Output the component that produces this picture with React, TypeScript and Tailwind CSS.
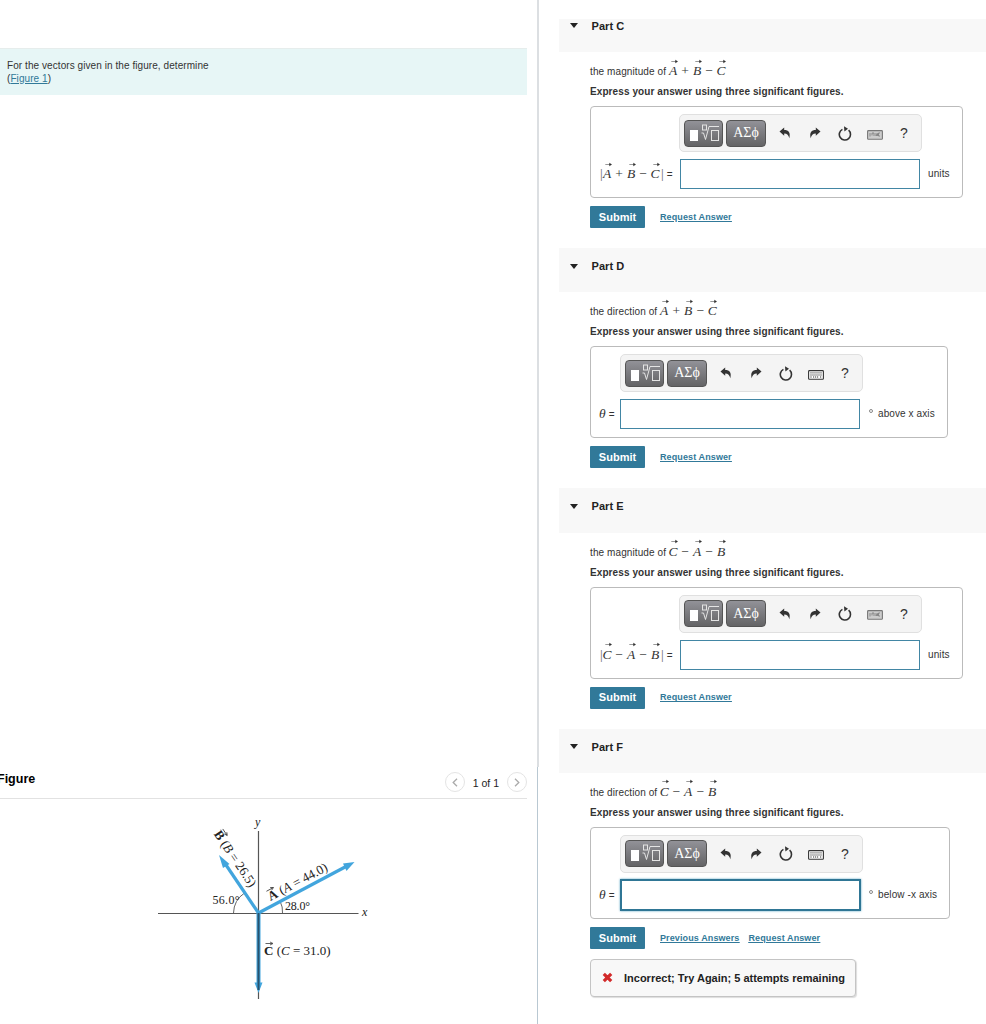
import type { ReactNode } from "react";

type PartProps = {
  title: string;
  kind: "magnitude" | "direction";
  formula: ReactNode;
  suffix: string;
  focused?: boolean;
  blurKeys?: boolean;
  children?: ReactNode;
};

const Vec = ({ children }: { children: string }) => (
  <span className="relative inline-block w-[10px] text-center">
    <i>{children}</i>
    <svg className="absolute -top-[1.5px] left-[3px]" width="7" height="5" viewBox="0 0 7 5">
      <path d="M0.3 2.5H5.5M4.5 1.2L6.6 2.5L4.5 3.8Z" stroke="#333" strokeWidth="0.5" fill="#333" />
    </svg>
  </span>
);

const Op = ({ children }: { children: string }) => (
  <span className="inline-block w-[14px] text-center">{children}</span>
);

const Sum = () => (
  <>
    <Vec>A</Vec>
    <Op>+</Op>
    <Vec>B</Vec>
    <Op>−</Op>
    <Vec>C</Vec>
  </>
);

const Difference = () => (
  <>
    <Vec>C</Vec>
    <Op>−</Op>
    <Vec>A</Vec>
    <Op>−</Op>
    <Vec>B</Vec>
  </>
);

const Toolbar = ({ blurKeys }: { blurKeys?: boolean }) => (
  <div className="flex h-[38px] w-[243px] items-center rounded-[5px] border border-[#e0e0e0] bg-[#f4f4f4] pl-1">
    <button className="flex h-[27px] w-[39px] items-center justify-center rounded-[4px] border border-[#555] bg-gradient-to-b from-[#929298] to-[#646466]">
      <svg width="37" height="25" viewBox="0 0 37 25" fill="none">
        <rect x="5" y="9" width="8" height="11" fill="#fff" />
        <g stroke="#e4e4e4">
          <rect x="17.5" y="4" width="4" height="5" />
          <path d="M16.5 12H18.5L20.5 18.5L24 5.5H34" />
          <rect x="26.5" y="9.5" width="7" height="10" />
        </g>
      </svg>
    </button>
    <button className="ml-[3px] h-[27px] w-[40px] rounded-[4px] border border-[#555] bg-gradient-to-b from-[#929298] to-[#646466] font-['Liberation_Serif',serif] text-[14px] leading-[24px] text-white">
      ΑΣϕ
    </button>
    <svg className="ml-[12.5px]" width="12" height="12" viewBox="0 0 12 12">
      <path d="M0.5 4.5L5.2 0.5V3C9.5 3 11.8 5.5 10.3 11.3C9.6 8.2 8.2 6.5 5.2 6.4V8.8Z" fill="#333" />
    </svg>
    <svg className="ml-[18px]" width="12" height="12" viewBox="0 0 12 12">
      <path d="M11.5 4.5L6.8 0.5V3C2.5 3 0.2 5.5 1.7 11.3C2.4 8.2 3.8 6.5 6.8 6.4V8.8Z" fill="#333" />
    </svg>
    <svg className="ml-[17px]" width="14" height="15" viewBox="0 0 14 15">
      <path d="M10.6 4.2A5.6 5.6 0 1 1 4.4 3.4" fill="none" stroke="#333" strokeWidth="1.6" />
      <path d="M6 0.2L10 2.8L6.4 5.6Z" fill="#333" />
    </svg>
    <svg className="ml-[15px] mt-[3px]" width="16" height="10" viewBox="0 0 16 10">
      <rect x="0.6" y="0.6" width="14.8" height="8.6" rx="0.8" fill={blurKeys ? "#ccc" : "#fff"} stroke={blurKeys ? "#777" : "#333"} strokeWidth="1.1" />
      {blurKeys ? (
        <path d="M3 3V6.5M5 5.5V3H7V6M9 3V6L10.5 3.5V6M13 3H11.5V6H13" fill="none" stroke="#777" strokeWidth="0.8" />
      ) : (
        <path d="M2.4 2.9H13.6M2.4 5H13.6M2.4 7H4M5 7H11M12 7H13.6" stroke="#333" strokeWidth="1" strokeDasharray="1.2 0.8" />
      )}
    </svg>
    <span className="ml-[17.5px] text-[14px] leading-none text-[#333]">?</span>
  </div>
);

const Part = ({ title, kind, formula, suffix, focused, blurKeys, children }: PartProps) => {
  const isMagnitude = kind === "magnitude";

  return (
    <section className="h-[240.33px] shrink-0">
      <header className="flex h-[44.33px] items-start bg-[#f8f8f8] pl-[10.5px] pt-[10px]">
        <svg className="mt-[5.5px]" width="8" height="5" viewBox="0 0 8 5">
          <path d="M0 0H8L4 5Z" fill="#222" />
        </svg>
        <h2 className="ml-[14px] text-[11px] font-bold leading-4 tracking-[0.05px] text-[#222]">{title}</h2>
      </header>
      <div className="pl-[31px] pt-[8px]">
        <p className="flex h-[22px] items-baseline text-[10px] leading-[22px]">
          <span className="tracking-[0.1px]">the {kind} of</span>
          <span className="ml-[2px] whitespace-nowrap font-['Liberation_Serif',serif] text-[13.5px]">{formula}</span>
        </p>
        <p className="mt-[3px] text-[10px] font-bold leading-[14px] tracking-[0.09px]">
          Express your answer using three significant figures.
        </p>
        <div className="mt-[7px] flex">
          <div
            className={
              "flex h-[92px] rounded-[4px] border border-[#bbb] pt-[7px] " + (isMagnitude ? "w-[373px] pl-[9px]" : suffix.startsWith("below") ? "w-[360px] pl-[8px]" : "w-[358px] pl-[8px]")
            }
          >
            <div
              className={
                "flex items-baseline whitespace-nowrap pt-[49px] font-['Liberation_Serif',serif] text-[13.5px] leading-[22px] " +
                (isMagnitude ? "w-[79px]" : "w-[21px]")
              }
            >
              {isMagnitude ? (
                <span>
                  <span className="inline-block w-[2px] text-[#666]">|</span>
                  {formula}
                  <span className="ml-[1px] text-[#666]">|</span>
                </span>
              ) : (
                <i>θ</i>
              )}
              <span className="ml-[3px] font-['Liberation_Sans',sans-serif] text-[10px]">=</span>
            </div>
            <div className="w-[243px] shrink-0">
              <Toolbar blurKeys={blurKeys} />
              <input
                aria-label={title}
                className={
                  focused
                    ? "mt-[6px] block h-[32px] w-[241px] border-2 border-[#2f7695] shadow-[0_0_2px_#5ba4c4] outline-none"
                    : isMagnitude
                      ? "ml-px mt-[7px] block h-[30px] w-[240px] border border-[#4286a4] outline-none"
                      : "mt-[7px] block h-[30px] w-[240px] border border-[#4286a4] outline-none"
                }
              />
            </div>
            <div className="flex whitespace-nowrap pl-[6px] pt-[52px] text-[10px] leading-[16px] tracking-[0.1px]">
              {!isMagnitude && <span className="mr-[5px] mt-[3px] size-[4px] rounded-full border border-[#888]" />}
              {suffix}
            </div>
          </div>
        </div>
        <div className="mt-[8px] flex items-center text-[10px] font-bold">
          <button className="h-[22px] w-[55px] rounded-[1px] bg-[#317999] text-[11px] text-white">Submit</button>
          <div className="ml-[15px] flex gap-[9px] pt-px text-[9px] tracking-[0.11px] text-[#317999] underline">
            {focused && <a>Previous Answers</a>}
            <a>Request Answer</a>
          </div>
        </div>
        {children}
      </div>
    </section>
  );
};

const VectorFigure = () => (
  <svg className="ml-[150px] mt-[11px]" width="230" height="195" viewBox="150 810 230 195" fontFamily="'Liberation Serif', serif" fill="#222">
    {/* axes */}
    <path d="M158 913.5H358.5M258.5 831V999" stroke="#555" strokeWidth="1.2" />
    <text x="255" y="826" fontSize="12" fontStyle="italic">y</text>
    <text x="362" y="916" fontSize="12" fontStyle="italic">x</text>

    {/* angle arcs */}
    <path d="M233.5 913A25 25 0 0 1 244.5 893M280 901Q283 907 282.5 913" fill="none" stroke="#666" />
    <text x="212.5" y="904" fontSize="12" textLength="27">56.0°</text>
    <text x="285" y="910" fontSize="12" textLength="25">28.0°</text>

    {/* vectors */}
    <g stroke="#42a5dd" strokeWidth="3.2" fill="#42a5dd">
      <path d="M258.5 913L224 862" />
      <path d="M258.5 913L346 866.5" />
      <path d="M258.5 913V984" strokeWidth="4" />
      <path d="M219 855L229.5 864L223 868Z" stroke="none" />
      <path d="M354.5 862L343 863.5L346.5 871Z" stroke="none" />
      <path d="M258.5 993L254.5 982.5H262.5Z" stroke="none" />
    </g>
    <path d="M258.5 913V990" stroke="#29536e" strokeWidth="2" />

    {/* labels */}
    <g fontSize="13">
      <g transform="translate(213.5 834) rotate(56)">
        <text><tspan fontWeight="bold">B</tspan> (<tspan fontStyle="italic">B</tspan> = 26.5)</text>
        <path d="M1 -10.5H8M6 -12L9 -10.5L6 -9" fill="none" stroke="#222" strokeWidth="0.7" />
      </g>
      <g transform="translate(270.5 901) rotate(-28)">
        <text><tspan fontWeight="bold">A</tspan> (<tspan fontStyle="italic">A</tspan> = 44.0)</text>
        <path d="M1 -10.5H8M6 -12L9 -10.5L6 -9" fill="none" stroke="#222" strokeWidth="0.7" />
      </g>
      <text x="264" y="955"><tspan fontWeight="bold">C</tspan> (<tspan fontStyle="italic">C</tspan> = 31.0)</text>
      <path d="M265.5 943.5H272M270 942L273 943.5L270 945" fill="none" stroke="#222" strokeWidth="0.7" />
    </g>
  </svg>
);

export default function App() {
  return (
    <div className="flex h-[1024px] w-[986px] overflow-hidden bg-white font-['Liberation_Sans',Arial,sans-serif] text-[#333]">
      <aside className="flex w-[537px] shrink-0 flex-col">
        <div className="mt-[48px] h-[47px] w-[527px] border-t border-[#e6edec] bg-[#e7f6f6] pl-[7px] pt-[11px] text-[10px] leading-[12.5px] tracking-[0.07px]">
          For the vectors given in the figure, determine
          <br />
          (<a className="text-[#317999] underline">Figure 1</a>)
        </div>
        <div className="mt-[672px] flex h-[32px] w-[527px] border-b border-[#e2e2e2]">
          <h2 className="-ml-[3px] pt-[4px] text-[12.5px] font-bold leading-[16px] text-black">Figure</h2>
          <div className="ml-auto flex h-[30px] items-center">
            <button className="flex size-[20px] items-center justify-center rounded-full border border-[#e4e4e4]">
              <svg width="6" height="9" viewBox="0 0 6 9" fill="none"><path d="M5 0.8L1.2 4.5L5 8.2" stroke="#aaa" strokeWidth="1.3" /></svg>
            </button>
            <span className="mx-[8px] pt-[3px] text-[10.5px] text-[#222]">1 of 1</span>
            <button className="flex size-[20px] items-center justify-center rounded-full border border-[#e4e4e4]">
              <svg width="6" height="9" viewBox="0 0 6 9" fill="none"><path d="M1 0.8L4.8 4.5L1 8.2" stroke="#aaa" strokeWidth="1.3" /></svg>
            </button>
          </div>
        </div>
        <VectorFigure />
      </aside>

      <div className="flex w-[2px] shrink-0 flex-col">
        <div className="h-[767px] w-[1.5px] bg-[#dcdfe2]" />
        <div className="w-px flex-1 bg-[#b9c8d2]" />
      </div>

      <main className="ml-[20px] mt-[19px] flex h-[1005px] flex-1 flex-col overflow-hidden">
        <div className="-mt-[11.33px]">
          <Part title="Part C" kind="magnitude" formula={<Sum />} suffix="units" blurKeys />
          <Part title="Part D" kind="direction" formula={<Sum />} suffix="above x axis" />
          <Part title="Part E" kind="magnitude" formula={<Difference />} suffix="units" blurKeys />
          <Part title="Part F" kind="direction" formula={<Difference />} suffix="below -x axis" focused>
            <div className="mt-[10px] flex h-[38px] w-[266px] items-center rounded-[4px] border border-[#c4c4c4] bg-[#f8f8f8] pl-[11px] shadow-[1px_1px_1px_#ddd]">
              <svg width="11" height="11" viewBox="0 0 11 11">
                <path d="M1.8 1.8L9.2 9.2M9.2 1.8L1.8 9.2" stroke="#d22a2a" strokeWidth="3.2" />
              </svg>
              <span className="ml-[11px] whitespace-nowrap pt-px text-[11px] font-bold text-[#222]">
                Incorrect; Try Again; 5 attempts remaining
              </span>
            </div>
          </Part>
        </div>
      </main>
    </div>
  );
}
